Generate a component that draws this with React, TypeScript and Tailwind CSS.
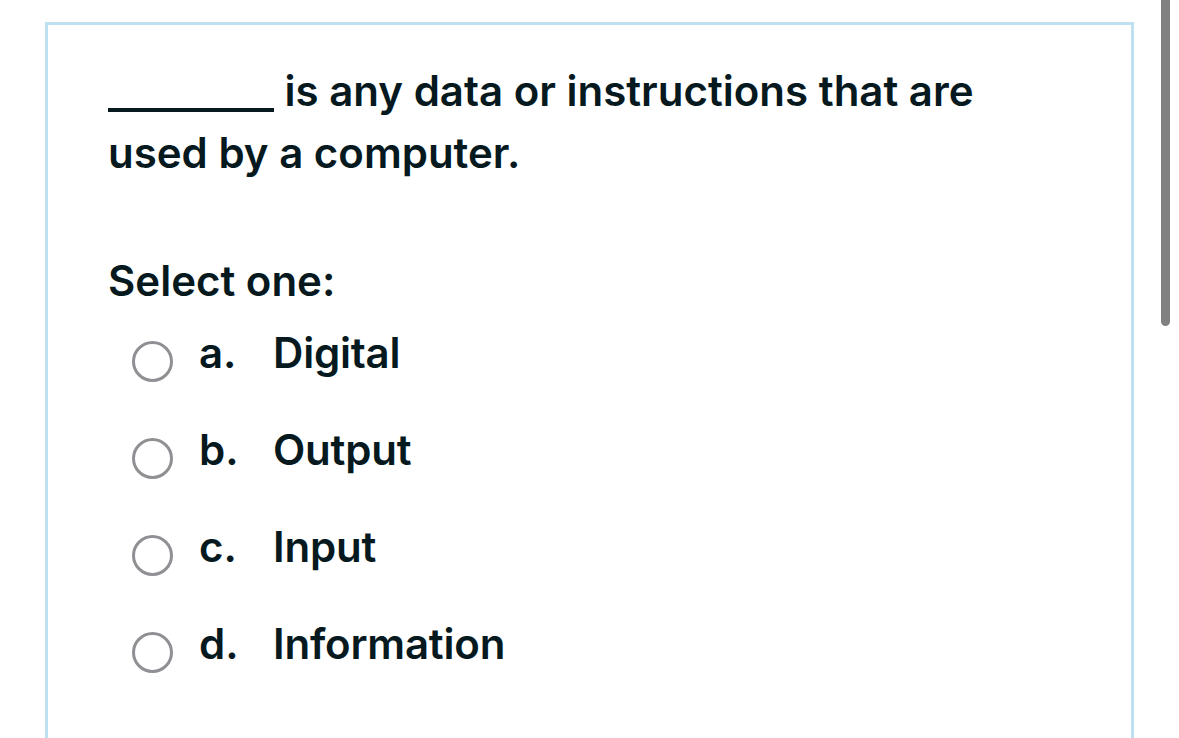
import React from 'react';

const options = [
  { key: 'a.', label: 'Digital' },
  { key: 'b.', label: 'Output' },
  { key: 'c.', label: 'Input' },
  { key: 'd.', label: 'Information' },
];

export default function App() {
  return (
    <div
      className="relative h-[738px] w-full overflow-hidden bg-white text-[#06191e]"
      style={{ fontFamily: 'Inter, "Noto Sans", sans-serif' }}
    >
      {/* question card */}
      <div className="ml-[45px] mt-[22px] h-[800px] w-[1089px] border-[3px] border-[#bfe0f1] pl-[60px] pt-[35px]">
        <p className="text-[42px] font-semibold leading-[62px]">
          <span className="inline-block w-[166px] border-b-[4px] border-[#06191e] align-[-6px]" />{' '}
          is any data or instructions that are
          <br />
          used by a computer.
        </p>

        <p className="mt-[73px] text-[42px] font-semibold leading-[48px]">Select one:</p>

        <div className="mt-[24px] flex flex-col gap-[44px]">
          {options.map((o) => (
            <div key={o.key} className="flex items-start">
              <span className="ml-[24px] mt-[12px] h-[41px] w-[41px] shrink-0 rounded-full border-[3px] border-[#909094]" />
              <span className="ml-[26px] w-[74px] text-[42px] font-semibold leading-[48px]">{o.key}</span>
              <span className="text-[42px] font-semibold leading-[48px] tracking-[-0.2px]">{o.label}</span>
            </div>
          ))}
        </div>
      </div>

      {/* scrollbar thumb */}
      <div className="absolute right-[9px] top-0 h-[326px] w-[9px] rounded-b-full bg-[#808080]" />
    </div>
  );
}
